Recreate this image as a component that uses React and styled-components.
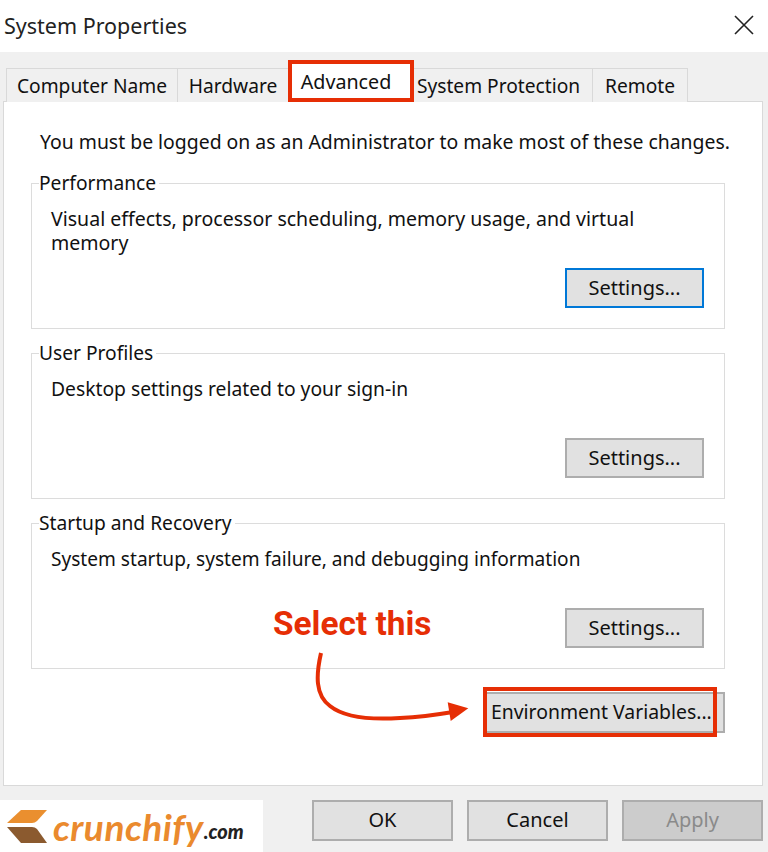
import React from "react"
import styled, { createGlobalStyle } from "styled-components"

const GlobalStyle = createGlobalStyle`
  html, body {
    margin: 0;
    padding: 0;
    background: #f0f0f0;
  }
  * {
    box-sizing: border-box;
  }
`
const Window = styled.div`
  width: 768px;
  height: 852px;
  display: flex;
  flex-direction: column;
  background: #f0f0f0;
  color: #111;
  font-family: "Noto Sans", "Open Sans", sans-serif;
  font-size: 19.4px;
  overflow: hidden;
`
const TitleBar = styled.div`
  height: 52px;
  flex: none;
  background: #fff;
  display: flex;
  align-items: center;
  justify-content: space-between;
  padding: 0 14px 2px 4px;
`
const Title = styled.div`
  font-size: 21.5px;
  color: #222;
`
const Body = styled.div`
  flex: 1;
  padding: 8px 5px 0 3px;
  display: flex;
  flex-direction: column;
`
const TabRow = styled.div`
  height: 42px;
  padding-left: 3px;
  display: flex;
  align-items: flex-end;
  margin-bottom: -1px;
  position: relative;
  font-size: 19.2px;
`
const Tab = styled.div`
  height: 34px;
  width: ${p => p.$w}px;
  display: flex;
  align-items: center;
  justify-content: center;
  padding-right: ${p => p.$inset || 0}px;
  background: #f0f0f0;
  border: 1px solid #d9d9d9;
  border-bottom: none;
  border-left-width: ${p => (p.$first ? 1 : 0)}px;
`
const ActiveTab = styled.div`
  height: 42px;
  width: 126px;
  margin-left: -1px;
  margin-right: -1px;
  padding-right: 10px;
  display: flex;
  align-items: center;
  justify-content: center;
  background: #fff;
  border: 4px solid #e62e05;
  font-size: 19.7px;
  position: relative;
  z-index: 1;
`
const Panel = styled.div`
  height: 685px;
  background: #fff;
  border: 1px solid #d9d9d9;
  padding: 26px 37px 0 27px;
  display: flex;
  flex-direction: column;
`
const Notice = styled.p`
  margin: 0 0 28px 9px;
  white-space: nowrap;
`
const Groups = styled.div`
  display: flex;
  flex-direction: column;
  gap: 24px;
`
const Group = styled.div`
  height: 146px;
  border: 1px solid #dcdcdc;
  padding: 23px 20px 20px 19px;
  display: flex;
  flex-direction: column;
  justify-content: space-between;
  position: relative;
`
const Legend = styled.span`
  position: absolute;
  top: -15px;
  left: 7px;
  padding-right: 3px;
  background: #fff;
  font-size: 19.2px;
  line-height: 27px;
`
const GroupText = styled.div`
  font-size: ${p => p.$size}px;
  line-height: 24px;
`
const ButtonRow = styled.div`
  display: flex;
  justify-content: flex-end;
`
const Button = styled.div`
  height: 40px;
  width: 139px;
  padding-bottom: 2px;
  display: flex;
  align-items: center;
  justify-content: center;
  border: 2px solid ${p => (p.$focused ? "#0078d7" : "#adadad")};
  color: ${p => (p.$disabled ? "#8a8a8a" : "#111")};
  background: ${p => (p.$disabled ? "#cccccc" : "#e1e1e1")};
  font-size: 20px;
  white-space: nowrap;
`
const EnvRow = styled.div`
  margin-top: 23px;
  display: flex;
  justify-content: flex-end;
  position: relative;
`
const EnvButton = styled(Button)`
  width: 241px;
  height: 41px;
  justify-content: flex-start;
  padding-left: 5px;
  font-size: 19.4px;
`
const EnvHighlight = styled.div`
  position: absolute;
  right: 8px;
  top: -5px;
  width: 234px;
  height: 50px;
  border: 4px solid #e62e05;
`
const Callout = styled.div`
  position: absolute;
  left: 242px;
  top: -88px;
  color: #e62e05;
  font-family: Roboto, "Liberation Sans", sans-serif;
  font-weight: 700;
  font-size: 33.4px;
  line-height: 40px;
  white-space: nowrap;
`
const CalloutArrow = styled.svg`
  position: absolute;
  left: 284px;
  top: -42px;
`
const Footer = styled.div`
  height: 66px;
  margin-left: -3px;
  padding-top: 14px;
  display: flex;
  justify-content: space-between;
`
const Logo = styled.div`
  width: 263px;
  height: 52px;
  background: #fff;
  display: flex;
  align-items: center;
  padding-left: 6px;
  gap: 5px;
`
const LogoName = styled.span`
  color: #ea8a2e;
  font-family: "Lato", sans-serif;
  font-style: italic;
  font-weight: 700;
  font-size: 37px;
  letter-spacing: 0.5px;
`
const LogoDomain = styled.span`
  color: #222;
  font-family: "Lato", sans-serif;
  font-style: italic;
  font-weight: 900;
  font-size: 20px;
  margin-left: -5px;
  margin-top: 10px;
`
const FooterButtons = styled.div`
  display: flex;
  gap: 14px;
`
const FooterButton = styled(Button)`
  width: 141px;
  height: 41px;
`

const tabsBefore = [
  { label: "Computer Name", w: 172, first: true },
  { label: "Hardware", w: 111 }
]
const tabsAfter = [
  { label: "System Protection", w: 180, inset: 8 },
  { label: "Remote", w: 95 }
]

const groups = [
  {
    legend: "Performance",
    size: 19.55,
    text: (
      <>
        Visual effects, processor scheduling, memory usage, and virtual
        <br />
        memory
      </>
    ),
    focused: true
  },
  { legend: "User Profiles", size: 19.3, text: "Desktop settings related to your sign-in" },
  {
    legend: "Startup and Recovery",
    size: 19.1,
    text: "System startup, system failure, and debugging information"
  }
]

const CloseIcon = () => (
  <svg width="20" height="20" viewBox="0 0 20 20">
    <path d="M1 1 L19 19 M19 1 L1 19" stroke="#222" strokeWidth="1.6" fill="none" />
  </svg>
)

const LogoMark = () => (
  <svg width="42" height="36" viewBox="0 0 42 36">
    <path d="M15 2 H41 L31 13 Q29 15 26 15 H1 Z" fill="#ea8f2f" />
    <path d="M1 19 H26 Q29 19 31 21 L41 35 H15 Z" fill="#8b5a2f" />
  </svg>
)

const App = () => (
  <Window>
    <GlobalStyle />
    <TitleBar>
      <Title>System Properties</Title>
      <CloseIcon />
    </TitleBar>
    <Body>
      <TabRow>
        {tabsBefore.map(t => (
          <Tab key={t.label} $w={t.w} $first={t.first}>
            {t.label}
          </Tab>
        ))}
        <ActiveTab>Advanced</ActiveTab>
        {tabsAfter.map(t => (
          <Tab key={t.label} $w={t.w} $inset={t.inset}>
            {t.label}
          </Tab>
        ))}
      </TabRow>
      <Panel>
        <Notice>You must be logged on as an Administrator to make most of these changes.</Notice>
        <Groups>
          {groups.map(g => (
            <Group key={g.legend}>
              <Legend>{g.legend}</Legend>
              <GroupText $size={g.size}>{g.text}</GroupText>
              <ButtonRow>
                <Button $focused={g.focused}>Settings...</Button>
              </ButtonRow>
            </Group>
          ))}
        </Groups>
        <EnvRow>
          <Callout>Select this</Callout>
          <CalloutArrow width="160" height="80" viewBox="0 0 160 80">
            <path
              d="M6 3 C1 25 0 45 15 56 C30 68 55 70 85 68 C105 67 120 65 138 62"
              stroke="#e62e05"
              strokeWidth="4"
              fill="none"
            />
            <path d="M132.7 52.3 L153.3 58.3 L135.7 71 Z" fill="#e62e05" />
          </CalloutArrow>
          <EnvButton>Environment Variables...</EnvButton>
          <EnvHighlight />
        </EnvRow>
      </Panel>
      <Footer>
        <Logo>
          <LogoMark />
          <LogoName>crunchify</LogoName>
          <LogoDomain>.com</LogoDomain>
        </Logo>
        <FooterButtons>
          <FooterButton>OK</FooterButton>
          <FooterButton>Cancel</FooterButton>
          <FooterButton $disabled>Apply</FooterButton>
        </FooterButtons>
      </Footer>
    </Body>
  </Window>
)

export default App
